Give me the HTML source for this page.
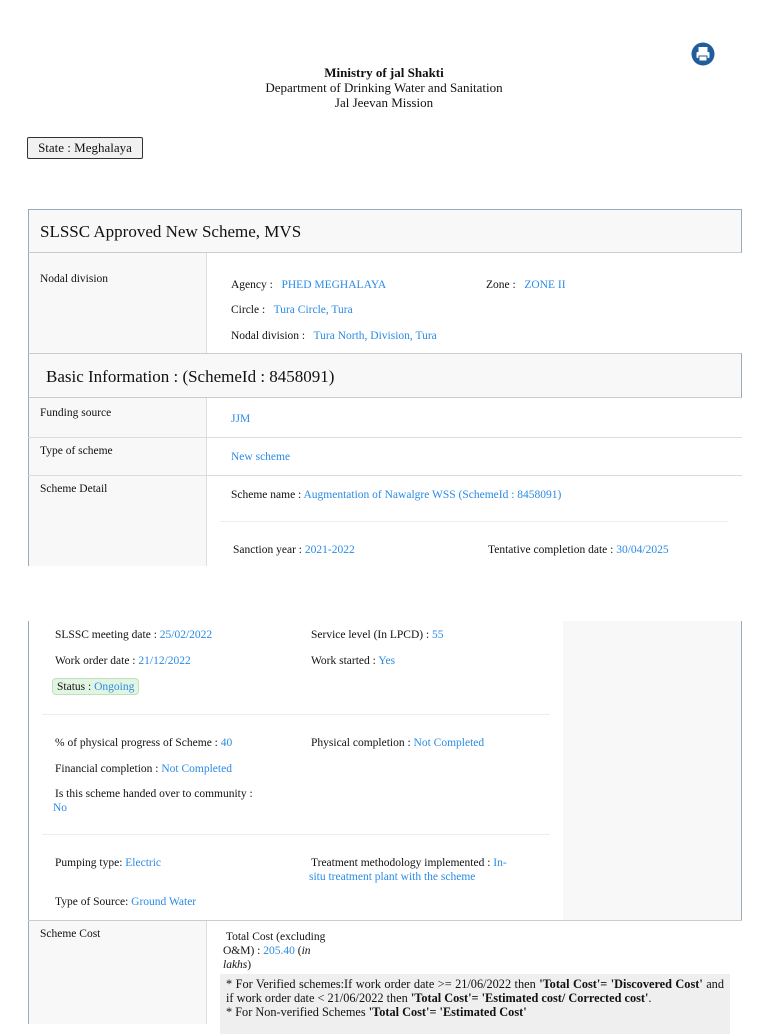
<!DOCTYPE html>
<html><head><meta charset="utf-8"><style>
*{margin:0;padding:0;box-sizing:border-box}
body{width:768px;height:1024px;overflow:hidden;background:#fff;font-family:"Liberation Serif",serif;color:#111;font-size:11.5px;position:relative}
.a{position:absolute;white-space:nowrap}
.b{color:#2a8be6}
.gray{background:#f8f8f9}
.line{position:absolute;background:#dcdcdc}
.t{margin-top:2px}
</style></head><body>
<svg class="a" style="left:691px;top:42px" width="24" height="24" viewBox="0 0 24 24"><circle cx="12" cy="12" r="11.5" fill="#1f5d9c"/><rect x="7.5" y="5" width="9" height="6" fill="#fff"/><rect x="5.5" y="10" width="13" height="6" rx="1" fill="#fff"/><rect x="8" y="14" width="8" height="5" fill="#fff" stroke="#1f5d9c" stroke-width="1"/></svg>
<div class="a" style="left:0;width:768px;top:65px;text-align:center;font-size:13px;line-height:15px">
<b>Ministry of jal Shakti</b><br>Department of Drinking Water and Sanitation<br>Jal Jeevan Mission</div>
<div class="a" style="left:27px;top:137px;width:116px;height:22px;border:1px solid #333;border-radius:2px;background:#f1f1f1;font-size:13px;line-height:20px;text-align:center">State : Meghalaya</div>

<div class="a gray" style="left:28px;top:209px;width:714px;height:44px;border:1px solid #9ab;border-bottom:1px solid #ccc"></div>
<div class="a" style="left:40px;top:222px;font-size:17px">SLSSC Approved New Scheme, MVS</div>
<div class="a gray" style="left:28px;top:253px;width:179px;height:313px;border-left:1px solid #9ab;border-right:1px solid #ddd"></div>
<div class="a" style="left:40px;top:273px">Nodal division</div>
<div class="a" style="left:231px;top:279px">Agency :&nbsp;&nbsp; <span class="b">PHED MEGHALAYA</span></div>
<div class="a" style="left:486px;top:279px">Zone :&nbsp;&nbsp; <span class="b">ZONE II</span></div>
<div class="a" style="left:231px;top:304px">Circle :&nbsp;&nbsp; <span class="b">Tura Circle, Tura</span></div>
<div class="a" style="left:231px;top:330px">Nodal division :&nbsp;&nbsp; <span class="b">Tura North, Division, Tura</span></div>
<div class="a gray" style="left:28px;top:353px;width:714px;height:45px;border:1px solid #9ab;border-bottom:1px solid #ccc;border-top:1px solid #ccc"></div>
<div class="a" style="left:46px;top:367px;font-size:17px">Basic Information : (SchemeId : 8458091)</div>
<div class="a" style="left:40px;top:407px">Funding source</div>
<div class="a b" style="left:231px;top:413px">JJM</div>
<div class="line" style="left:28px;top:437px;width:714px;height:1px"></div>
<div class="a" style="left:40px;top:445px">Type of scheme</div>
<div class="a b" style="left:231px;top:451px">New scheme</div>
<div class="line" style="left:28px;top:475px;width:714px;height:1px"></div>
<div class="a" style="left:40px;top:483px">Scheme Detail</div>
<div class="a" style="left:231px;top:489px">Scheme name : <span class="b">Augmentation of Nawalgre WSS (SchemeId : 8458091)</span></div>
<div class="line" style="left:220px;top:521px;width:508px;height:1px;background:#eee"></div>
<div class="a" style="left:233px;top:544px">Sanction year : <span class="b">2021-2022</span></div>
<div class="a" style="left:488px;top:544px">Tentative completion date : <span class="b">30/04/2025</span></div>

<div class="a" style="left:28px;top:621px;width:714px;height:299px;border-left:1px solid #9ab;border-right:1px solid #9ab"></div>
<div class="a gray" style="left:563px;top:621px;width:178px;height:299px"></div>
<div class="a" style="left:55px;top:629px">SLSSC meeting date : <span class="b">25/02/2022</span></div>
<div class="a" style="left:311px;top:629px">Service level (In LPCD) : <span class="b">55</span></div>
<div class="a" style="left:55px;top:655px">Work order date : <span class="b">21/12/2022</span></div>
<div class="a" style="left:311px;top:655px">Work started : <span class="b">Yes</span></div>
<div class="a" style="left:52px;top:678px;height:17px;padding:0 4px;line-height:16px;background:#e2f5e2;border:1px solid #bde0bd;border-radius:4px">Status : <span class="b">Ongoing</span></div>
<div class="line" style="left:42px;top:714px;width:508px;height:1px;background:#eee"></div>
<div class="a" style="left:55px;top:737px">% of physical progress of Scheme : <span class="b">40</span></div>
<div class="a" style="left:311px;top:737px">Physical completion : <span class="b">Not Completed</span></div>
<div class="a" style="left:55px;top:763px">Financial completion : <span class="b">Not Completed</span></div>
<div class="a" style="left:55px;top:788px">Is this scheme handed over to community :</div>
<div class="a b" style="left:53px;top:802px">No</div>
<div class="line" style="left:42px;top:834px;width:508px;height:1px;background:#eee"></div>
<div class="a" style="left:55px;top:857px">Pumping type: <span class="b">Electric</span></div>
<div class="a" style="left:311px;top:857px">Treatment methodology implemented : <span class="b">In-</span></div>
<div class="a b" style="left:309px;top:871px">situ treatment plant with the scheme</div>
<div class="a" style="left:55px;top:896px">Type of Source: <span class="b">Ground Water</span></div>

<div class="line" style="left:28px;top:920px;width:714px;height:1px;background:#ccc"></div>
<div class="a gray" style="left:28px;top:921px;width:179px;height:103px;border-left:1px solid #9ab;border-right:1px solid #ddd"></div>
<div class="a" style="left:40px;top:928px">Scheme Cost</div>
<div class="a" style="left:223px;top:930px;line-height:14px;white-space:normal;width:118px">&nbsp;Total Cost (excluding O&amp;M) : <span class="b">205.40</span> (<i>in lakhs</i>)</div>
<div class="a" style="left:220px;top:974px;width:510px;height:60px;background:#efefef;padding:3px 6px;white-space:normal;text-align:justify;line-height:14px;font-size:12.3px">* For Verified schemes:If work order date &gt;= 21/06/2022 then <b>'Total Cost'= 'Discovered Cost'</b> and if work order date &lt; 21/06/2022 then <b>'Total Cost'= 'Estimated cost/ Corrected cost'</b>.<br>* For Non-verified Schemes <b>'Total Cost'= 'Estimated Cost'</b></div>
</body></html>
